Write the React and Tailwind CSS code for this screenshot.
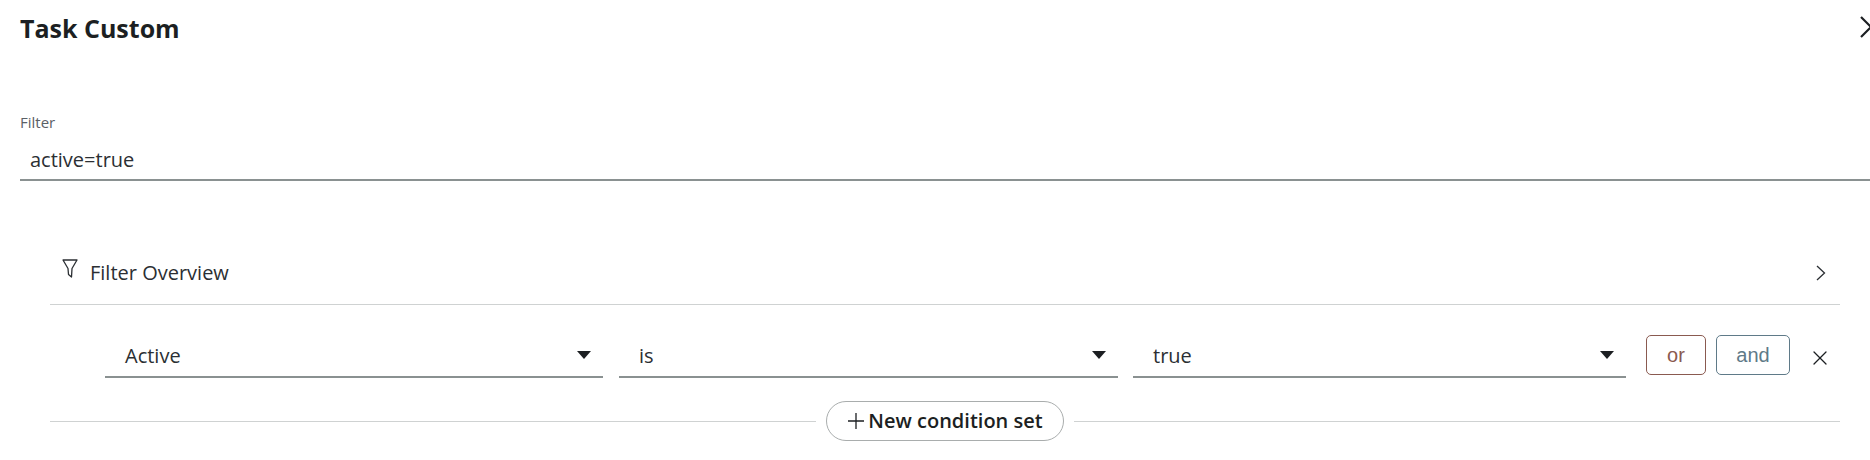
import React from 'react';
import { X } from 'lucide-react';

const Select = ({ value, className }) => (
  <div className={`flex h-[42px] items-center justify-between border-b-2 border-[#8a9191] pl-5 pr-[10px] ${className}`}>
    <span className="text-[20px] text-[#2b2f33]">{value}</span>
    <svg width="14" height="8" viewBox="0 0 14 8" className="mb-0.5 mr-0.5"><path d="M0 0h14L7 8z" fill="#1c1f22" /></svg>
  </div>
);

export default function App() {
  return (
    <div className="h-[460px] w-[1870px] overflow-hidden bg-white font-['Open_Sans',sans-serif] text-[#1c1f22]">
      <div className="flex items-start justify-between pl-5 pt-[12px]">
        <h1 className="text-[25px] leading-[33px] font-bold">Task Custom</h1>
        <svg width="10" height="22" viewBox="0 0 10 22" className="mt-1"><path d="M1 1l10 10L1 21" fill="none" stroke="#1c1f22" strokeWidth="2.2" /></svg>
      </div>

      <div className="mt-[68px] pl-5">
        <label className="block text-[15px] leading-[19px] text-[#5a6066]">Filter</label>
        <div className="flex h-[49px] items-center border-b-2 border-[#8a9191] pl-[10px] pt-[9px] text-[20px] text-[#2b2f33]">active=true</div>
      </div>

      <div className="ml-[50px] mr-[30px] mt-[50px]">
        <div className="flex h-[74px] items-center justify-between border-b border-[#cfd2d2] pl-[12px] pr-[14px] pt-[10px]">
          <div className="flex items-center gap-[12px]">
            <svg width="16" height="19" viewBox="0 0 16 19" className="mb-2" fill="none" stroke="#2b2f33" strokeWidth="1.3" strokeLinejoin="round"><path d="M1 1h14L10 9.500 9.500 18 6.500 15.500 6 9.500z" /></svg>
            <span className="text-[20px] text-[#2b2f33]">Filter Overview</span>
          </div>
          <svg width="10" height="16" viewBox="0 0 10 16"><path d="M1 1l7.500 7L1 15" fill="none" stroke="#2b2f33" strokeWidth="1.3" /></svg>
        </div>

        <div className="flex items-center pl-[55px] pt-[30px]">
          <Select value="Active" className="w-[498px]" />
          <Select value="is" className="ml-[16px] w-[499px]" />
          <Select value="true" className="ml-[15px] w-[493px]" />
          <button className="mb-[4px] ml-[20px] h-[40px] w-[60px] rounded-[5px] border border-[#8a5a50] font-['Liberation_Sans',sans-serif] text-[20px] text-[#8a5a50]">or</button>
          <button className="mb-[4px] ml-[10px] h-[40px] w-[74px] rounded-[5px] border border-[#5f7a88] font-['Liberation_Sans',sans-serif] text-[20px] text-[#5f7a88]">and</button>
          <X className="ml-[18px] translate-y-[1px]" size={24} strokeWidth={1.3} color="#1c1f22" />
        </div>

        <div className="mt-[22px] flex items-center gap-[10px]">
          <div className="h-px flex-1 bg-[#cfd2d2]" />
          <button className="flex h-[40px] w-[238px] items-center justify-center gap-[4px] rounded-full border border-[#a9adad] pl-px text-[20px] font-semibold text-[#1c1f22]">
            <svg width="16" height="16" viewBox="0 0 16 16"><path d="M8 0v16M0 8h16" stroke="#1c1f22" strokeWidth="1.3" /></svg>
            New condition set
          </button>
          <div className="h-px flex-1 bg-[#cfd2d2]" />
        </div>
      </div>
    </div>
  );
}
